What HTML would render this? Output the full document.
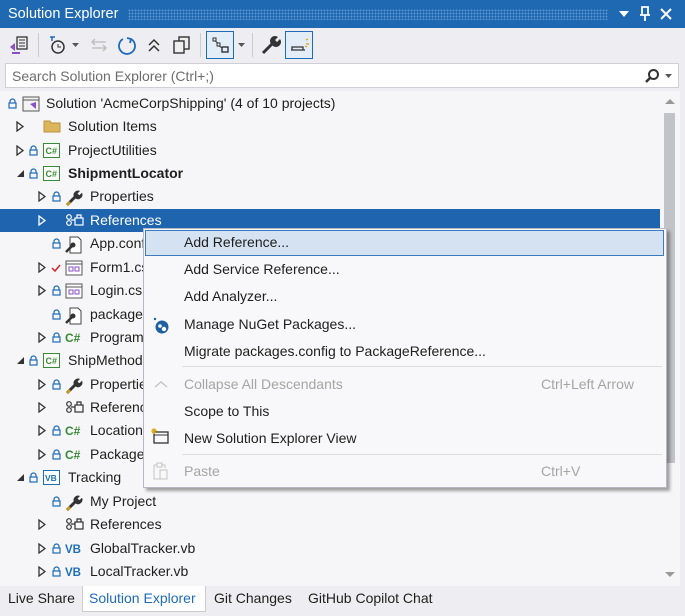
<!DOCTYPE html>
<html><head><meta charset="utf-8"><style>
*{margin:0;padding:0;box-sizing:border-box}
body{width:685px;height:616px;overflow:hidden;background:#eeeef2;font-family:"Liberation Sans",sans-serif;font-size:14px;color:#1e1e1e;position:relative}
.abs{position:absolute}
#title{left:0;top:0;width:685px;height:28px;background:#1f69b3;color:#fff}
#title .t{position:absolute;left:8px;top:6px;font-size:14.5px}
#title .dots{position:absolute;left:128px;top:9px;width:480px;height:11px;background-image:radial-gradient(#5b92cc 0.8px,transparent 0.9px);background-size:3px 3px}
#tb{left:0;top:28px;width:685px;height:35px;background:#eeeef2}
#search{left:5px;top:63px;width:674px;height:25px;background:#fff;border:1px solid #cfcfd6;color:#6d6d6d;font-size:14px;padding:4px 0 0 6px}
#tree{left:0;top:91px;width:680px;height:495px;background:#f6f6f8}
.r{position:absolute;left:0;width:660px;height:23px;line-height:23px}
.r>*{position:absolute}
.r span.tx{white-space:nowrap}
.sel{background:#1e64ae;color:#fff}
.cs{font-size:12px;color:#388a34;font-weight:bold;top:0}
.vb{font-size:11.5px;color:#1c6fb4;font-weight:bold;top:0}
#menu{left:143px;top:228px;width:524px;height:260px;background:#f8f8fa;border:1px solid #b8b8c0;box-shadow:3px 3px 3px rgba(0,0,0,.35);z-index:5}
.mi{position:absolute;left:40px;white-space:nowrap;font-size:14px}
.dis{color:#a5a5a5}
.sep{position:absolute;left:38px;right:4px;height:1px;background:#dcdce0}
#tabs{left:0;top:586px;width:685px;height:30px;background:#eeeef2;font-size:14px}
#tabs span{position:absolute;top:4px}
</style></head><body>
<div id="title" class="abs"><div class="t">Solution Explorer</div><div class="dots"></div>
<svg class="abs" style="left:618px;top:10px" width="12" height="8"><path d="M1 1h10L6 7z" fill="#fff"/></svg>
<svg class="abs" style="left:639px;top:6px" width="12" height="16"><path d="M3 1h6v8H3zM1 9h10M6 9v6" stroke="#fff" stroke-width="1.8" fill="none"/></svg>
<svg class="abs" style="left:659px;top:7px" width="14" height="14"><path d="M2 2l10 10M12 2L2 12" stroke="#fff" stroke-width="2"/></svg>
</div>
<div id="tb" class="abs">
<svg class="abs" style="left:8px;top:7px" width="22" height="20"><rect x="9" y="2" width="10" height="12" fill="none" stroke="#333" stroke-width="1.3"/><path d="M11 5h6M11 8h6M11 11h6" stroke="#333"/><path d="M2 12l5 4V8z" fill="#8a4fc4"/><path d="M4 18h8" stroke="#8a4fc4" stroke-width="2"/></svg>
<div class="abs" style="left:38px;top:5px;width:1px;height:24px;background:#ccc"></div>
<svg class="abs" style="left:46px;top:6px" width="22" height="22"><circle cx="12" cy="13" r="6" fill="none" stroke="#333" stroke-width="1.5"/><path d="M12 10v3h3" stroke="#333" fill="none"/><path d="M4 3h5M6 3v4" stroke="#1e6bb8" stroke-width="1.5"/></svg>
<svg class="abs" style="left:72px;top:15px" width="7" height="5"><path d="M0 0h7L3.5 4z" fill="#555"/></svg>
<svg class="abs" style="left:90px;top:9px" width="18" height="16"><path d="M2 5h14M2 11h14M5 2L2 5l3 3M13 8l3 3-3 3" stroke="#bbb" stroke-width="1.3" fill="none"/></svg>
<svg class="abs" style="left:116px;top:6px" width="22" height="22"><path d="M15 5a8 8 0 1 1-8 0" stroke="#1e6bb8" stroke-width="1.8" fill="none"/><path d="M11 4l4 1-1 4" stroke="#1e6bb8" stroke-width="1.8" fill="none"/></svg>
<svg class="abs" style="left:146px;top:8px" width="16" height="18"><path d="M3 9l5-5 5 5M3 15l5-5 5 5" stroke="#333" stroke-width="1.5" fill="none"/></svg>
<svg class="abs" style="left:172px;top:7px" width="20" height="20"><rect x="7" y="2" width="10" height="12" fill="#eee" stroke="#333" stroke-width="1.4"/><rect x="2" y="6" width="10" height="12" fill="#eee" stroke="#333" stroke-width="1.4"/></svg>
<div class="abs" style="left:200px;top:5px;width:1px;height:24px;background:#ccc"></div>
<div class="abs" style="left:206px;top:3px;width:28px;height:28px;border:1px solid #1e6bb8;background:#e3edf8"></div>
<svg class="abs" style="left:211px;top:8px" width="20" height="18"><rect x="2" y="2" width="3" height="3" fill="none" stroke="#333"/><rect x="6" y="7" width="3" height="3" fill="none" stroke="#333"/><rect x="11" y="11" width="6" height="5" fill="none" stroke="#333" stroke-width="1.4"/><path d="M4 5l3 2M8 10l3 2" stroke="#333"/></svg>
<svg class="abs" style="left:238px;top:15px" width="7" height="5"><path d="M0 0h7L3.5 4z" fill="#555"/></svg>
<div class="abs" style="left:252px;top:5px;width:1px;height:24px;background:#ccc"></div>
<svg class="abs" style="left:260px;top:6px" width="22" height="22"><path d="M3 19l9-9" stroke="#333" stroke-width="3"/><path d="M11 10a5 5 0 0 1 7-7l-3 3 2 2 3-3a5 5 0 0 1-7 7z" fill="#333"/></svg>
<div class="abs" style="left:285px;top:3px;width:28px;height:28px;border:1px solid #1e6bb8;background:#e3edf8"></div>
<svg class="abs" style="left:289px;top:9px" width="22" height="16"><path d="M2 13h14M3 10h11v3H3z" stroke="#333" stroke-width="1.3" fill="none"/><path d="M17 3l2-1M17 7h3M16 9l2 1" stroke="#d9a400" stroke-width="1.2"/></svg>
</div>
<div id="search" class="abs">Search Solution Explorer (Ctrl+;)
<svg class="abs" style="left:638px;top:4px" width="16" height="16"><circle cx="9.5" cy="6.5" r="4.5" fill="none" stroke="#333" stroke-width="2"/><path d="M6 10l-4 4" stroke="#333" stroke-width="2.5"/></svg>
<svg class="abs" style="left:659px;top:10px" width="7" height="4"><path d="M0 0h7L3.5 4z" fill="#555"/></svg>
</div>

<div id="tree" class="abs">
<svg class="abs" style="left:664px;top:6px" width="12" height="8"><path d="M1 7h10L6 2z" fill="#999"/></svg>
<div class="abs" style="left:664px;top:22px;width:11px;height:350px;background:#c2c3c9"></div>
<svg class="abs" style="left:664px;top:480px" width="12" height="8"><path d="M1 1h10L6 6z" fill="#999"/></svg>
</div>

<div class="abs" style="left:0;top:91px;width:660px;height:495px;overflow:hidden" id="rows"></div>

<div id="menu" class="abs">
<div class="abs" style="left:1px;top:1px;width:519px;height:26px;background:#d5e2f2;border:1px solid #3d7bc0"></div>
<span class="mi" style="top:5px">Add Reference...</span>
<span class="mi" style="top:32px">Add Service Reference...</span>
<span class="mi" style="top:59px">Add Analyzer...</span>
<svg class="abs" style="left:8px;top:88px" width="18" height="18"><circle cx="3" cy="2" r="1.2" fill="#1e5fa0"/><circle cx="10" cy="10" r="6.5" fill="#1e5fa0"/><circle cx="8" cy="9" r="1.8" fill="#fff"/><circle cx="12" cy="12" r="2.2" fill="#fff"/></svg>
<span class="mi" style="top:87px">Manage NuGet Packages...</span>
<span class="mi" style="top:114px">Migrate packages.config to PackageReference...</span>
<div class="sep" style="top:137px"></div>
<svg class="abs" style="left:10px;top:150px" width="14" height="10"><path d="M1 8l6-5 6 5" stroke="#c4c4c4" stroke-width="1.3" fill="none"/></svg>
<span class="mi dis" style="top:147px">Collapse All Descendants</span>
<span class="mi dis" style="top:147px;left:397px">Ctrl+Left Arrow</span>
<span class="mi" style="top:174px">Scope to This</span>
<svg class="abs" style="left:6px;top:198px" width="20" height="18"><rect x="4" y="5" width="14" height="11" fill="none" stroke="#333" stroke-width="1.3"/><path d="M4 8h14" stroke="#333"/><path d="M4 1v6M1 4h6M2 2l4 4M6 2L2 6" stroke="#d9a400" stroke-width="1"/></svg>
<span class="mi" style="top:201px">New Solution Explorer View</span>
<div class="sep" style="top:225px"></div>
<svg class="abs" style="left:8px;top:232px" width="16" height="20"><path d="M2 4h3M10 4h3v3M2 4v14h6" stroke="#c4c4c4" fill="none"/><rect x="8" y="9" width="7" height="9" fill="none" stroke="#c4c4c4"/><rect x="5" y="2" width="5" height="4" fill="none" stroke="#c4c4c4"/></svg>
<span class="mi dis" style="top:234px">Paste</span>
<span class="mi dis" style="top:234px;left:397px">Ctrl+V</span>
</div>

<div id="tabs" class="abs">
<span style="left:8px">Live Share</span>
<div class="abs" style="left:82px;top:0;width:124px;height:26px;background:#fff;border:1px solid #ccc;border-top:none"></div>
<span style="left:89px;color:#1e6bb8">Solution Explorer</span>
<span style="left:214px">Git Changes</span>
<span style="left:308px">GitHub Copilot Chat</span>
</div>

<script>
var C='#1e6bb8';
var ARc='<svg width="8" height="11"><path d="M1 1l6 4.5L1 10z" fill="none" stroke="COL" stroke-width="1.3"/></svg>';
var ARe='<svg width="9" height="9"><path d="M8 1v7H1z" fill="#333"/></svg>';
var LK='<svg width="9" height="11"><path d="M2 5V3.5a2.5 2.5 0 0 1 5 0V5" fill="none" stroke="'+C+'" stroke-width="1.2"/><rect x="1" y="5" width="7" height="5" fill="none" stroke="'+C+'" stroke-width="1.2"/></svg>';
var CHK='<svg width="10" height="10"><path d="M1 5l3 3 5-6" fill="none" stroke="#d2232a" stroke-width="1.5"/></svg>';
var I={
sol:'<svg width="18" height="16"><rect x="1" y="1" width="16" height="14" fill="#f3f3f3" stroke="#555"/><path d="M1 4h16" stroke="#555"/><path d="M8 8l6 5V6z" fill="#8a4fc4"/></svg>',
fold:'<svg width="18" height="14"><path d="M1 2h6l1 2h9v9H1z" fill="#dcb65a" stroke="#b9923c"/></svg>',
csp:'<svg width="17" height="15"><rect x="0.5" y="0.5" width="16" height="14" fill="#fff" stroke="#388a34"/><text x="2.5" y="11" font-size="9" font-weight="bold" fill="#388a34" font-family="Liberation Sans">C#</text></svg>',
vbp:'<svg width="17" height="15"><rect x="0.5" y="0.5" width="16" height="14" fill="#fff" stroke="#1c6fb4"/><text x="2" y="11" font-size="8.5" font-weight="bold" fill="#1c6fb4" font-family="Liberation Sans">VB</text></svg>',
wr:'<svg width="18" height="18"><path d="M2 16l8-8" stroke="#333" stroke-width="3"/><path d="M9 8a4.5 4.5 0 0 1 6-6l-2.5 2.5 1.8 1.8L17 3.8a4.5 4.5 0 0 1-6 6z" fill="#333"/><path d="M2 16l3-3" stroke="#c59a2a" stroke-width="3"/></svg>',
ref:'<svg width="20" height="14"><circle cx="4" cy="4" r="2.3" fill="none" stroke="COL" stroke-width="1.2"/><circle cx="4" cy="10" r="2.3" fill="none" stroke="COL" stroke-width="1.2"/><rect x="10" y="5" width="8" height="7" fill="none" stroke="COL" stroke-width="1.2"/><path d="M12 5V2h4v3M6 7h4" fill="none" stroke="COL" stroke-width="1.2"/></svg>',
cfg:'<svg width="18" height="18"><path d="M5 1h8l3 3v13H5z" fill="#fff" stroke="#444"/><path d="M1 16l6-6" stroke="#333" stroke-width="2.5"/><circle cx="8" cy="9" r="2.5" fill="#333"/></svg>',
frm:'<svg width="18" height="16"><rect x="1" y="1" width="16" height="14" fill="#fff" stroke="#555"/><path d="M1 4h16" stroke="#555"/><rect x="4" y="7" width="4" height="4" fill="none" stroke="#8a4fc4"/><rect x="10" y="7" width="4" height="4" fill="none" stroke="#8a4fc4"/></svg>',
cs:'<b class="cs" style="position:static">C#</b>',
vb:'<b class="vb" style="position:static">VB</b>'
};
var R=[
[103,0,0,1,8,'sol',22,"Solution 'AcmeCorpShipping' (4 of 10 projects)",46],
[126,'c',16,0,0,'fold',43,'Solution Items',68],
[150,'c',16,1,29,'csp',43,'ProjectUtilities',68],
[173,'e',16,1,29,'csp',43,'ShipmentLocator',68,1],
[196,'c',38,1,52,'wr',65,'Properties',90],
[220,'c',38,0,0,'ref',65,'References',90,0,1],
[243,0,0,1,52,'cfg',65,'App.config',90],
[267,'c',38,'chk',51,'frm',65,'Form1.cs',90],
[290,'c',38,1,52,'frm',65,'Login.cs',90],
[314,0,0,1,52,'cfg',65,'packages.config',90],
[337,'c',38,1,52,'cs',65,'Program.cs',90],
[360,'e',16,1,29,'csp',43,'ShipMethods',68],
[384,'c',38,1,52,'wr',65,'Properties',90],
[407,'c',38,0,0,'ref',65,'References',90],
[430,'c',38,1,52,'cs',65,'Location.cs',90],
[454,'c',38,1,52,'cs',65,'Packages.cs',90],
[477,'e',16,1,29,'vbp',43,'Tracking',68],
[501,0,0,1,52,'wr',65,'My Project',90],
[524,'c',38,0,0,'ref',65,'References',90],
[548,'c',38,1,52,'vb',65,'GlobalTracker.vb',90],
[571,'c',38,1,52,'vb',65,'LocalTracker.vb',90]
];
var h='';
R.forEach(function(a){
var sel=a[10];var col=sel?'#fff':'#333';
h+='<div class="r'+(sel?' sel':'')+'" style="top:'+(a[0]-91-11.5)+'px">';
if(a[1]=='c')h+='<span style="left:'+a[2]+'px;top:6px;line-height:0">'+ARc.replace('COL',col)+'</span>';
if(a[1]=='e')h+='<span style="left:'+a[2]+'px;top:7px;line-height:0">'+ARe+'</span>';
if(a[3]===1)h+='<span style="left:'+a[4]+'px;top:6px;line-height:0">'+LK+'</span>';
if(a[3]==='chk')h+='<span style="left:'+a[4]+'px;top:7px;line-height:0">'+CHK+'</span>';
var ic=I[a[5]];if(sel)ic=ic.replace(/COL/g,'#fff');else ic=ic.replace(/COL/g,'#333');
var isTxt=(a[5]=='cs'||a[5]=='vb');
h+='<span style="left:'+a[6]+'px;'+(isTxt?'top:0':'top:4px;line-height:0')+'">'+ic+'</span>';
h+='<span class="tx" style="left:'+a[8]+'px;top:0;'+(a[9]?'font-weight:bold;':'')+'">'+a[7]+'</span>';
h+='</div>';
});
document.getElementById('rows').innerHTML=h;
</script>
</body></html>
